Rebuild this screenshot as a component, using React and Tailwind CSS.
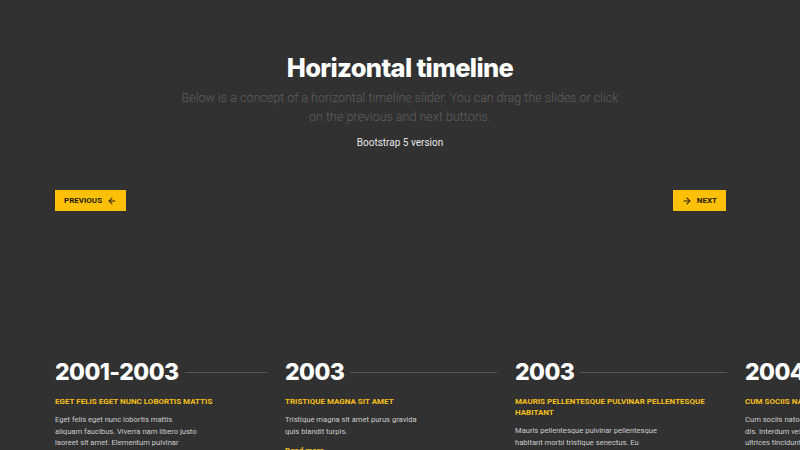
import { ArrowLeft, ArrowRight } from "lucide-react";

const slides = [
  {
    year: "2001-2003",
    title: "Eget felis eget nunc lobortis mattis",
    text: "Eget felis eget nunc lobortis mattis aliquam faucibus. Viverra nam libero justo laoreet sit amet. Elementum pulvinar etiam non quam lacus suspendisse.",
  },
  {
    year: "2003",
    title: "Tristique magna sit amet",
    text: "Tristique magna sit amet purus gravida quis blandit turpis.",
    more: true,
  },
  {
    year: "2003",
    title: "Mauris pellentesque pulvinar pellentesque habitant",
    text: "Mauris pellentesque pulvinar pellentesque habitant morbi tristique senectus. Eu consequat ac felis donec et odio.",
  },
  {
    year: "2004",
    title: "Cum sociis natoque penatibus",
    text: "Cum sociis natoque penatibus et magnis dis. Interdum velit laoreet id donec massa ultrices tincidunt arcu non sodales.",
  },
];

function Slide({ year, title, text, more }) {
  return (
    <div className="w-[230px] shrink-0 pr-[18px]">
      <div className="flex items-center gap-1.5">
        <h3 className="text-[23px] leading-none font-extrabold text-white tracking-tight font-['Inter',sans-serif]">
          {year}
        </h3>
        <span className="flex-1 h-px bg-[#555]" />
      </div>
      <h4 className="mt-[12px] text-[8px] leading-[11px] font-bold uppercase text-[#f7c01c] pr-2">
        {title}
      </h4>
      <p className="mt-[7px] text-[7.6px] leading-[11.5px] text-[#cdcdcd] w-[144px]">
        {text}
      </p>
      {more && (
        <a className="mt-[8px] block text-[8px] font-bold text-[#f7c01c] underline">
          Read more
        </a>
      )}
    </div>
  );
}

export default function App() {
  return (
    <div className="w-[800px] h-[450px] overflow-hidden bg-[#313131] font-['Roboto',sans-serif]">
      <section className="text-center pt-[52px]">
        <h1 className="text-[25.5px] leading-[32px] font-extrabold text-white tracking-tight font-['Inter',sans-serif]">
          Horizontal timeline
        </h1>
        <p className="mx-auto mt-[4px] w-[445px] text-[12.5px] leading-[19px] font-light text-[#5f5f5f]">
          Below is a concept of a horizontal timeline slider. You can drag the
          slides or click on the previous and next buttons.
        </p>
        <p className="mt-[9px] text-[10px] text-[#e6e6e6]">Bootstrap 5 version</p>
      </section>

      <div className="ml-[55px] w-[671px] mt-[40px] flex justify-between">
        <button className="h-[21px] px-[9px] flex items-center gap-[5px] bg-[#ffc107] text-[#231a00] text-[8px] font-bold uppercase">
          Previous
          <ArrowLeft size={10} strokeWidth={2.5} />
        </button>
        <button className="h-[21px] px-[9px] flex items-center gap-[5px] bg-[#ffc107] text-[#231a00] text-[8px] font-bold uppercase">
          <ArrowRight size={10} strokeWidth={2.5} />
          Next
        </button>
      </div>

      <div className="ml-[55px] mt-[150px] flex">
        {slides.map((s, i) => (
          <Slide key={i} {...s} />
        ))}
      </div>
    </div>
  );
}
